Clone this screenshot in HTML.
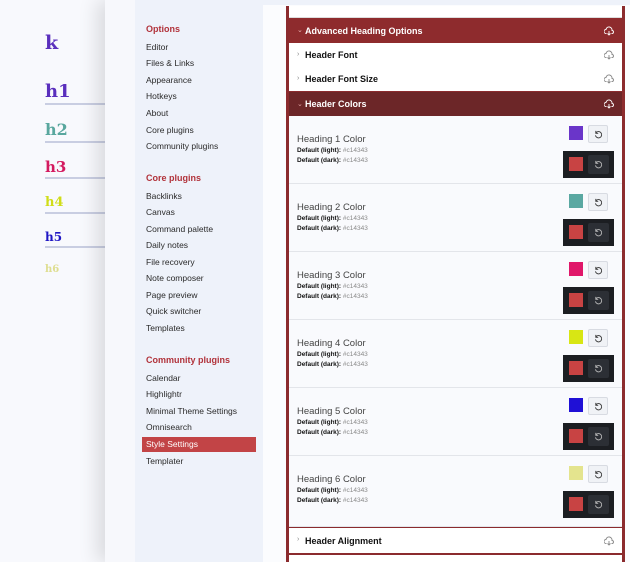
<!DOCTYPE html>
<html><head><style>
*{margin:0;padding:0;box-sizing:border-box}
body{width:630px;height:562px;overflow:hidden;background:#f8f9fd;font-family:"Liberation Sans",sans-serif;position:relative}
.abs{position:absolute}
.hd{position:absolute;left:45px;font-family:"DejaVu Serif","Liberation Serif",serif;font-weight:bold}
.ln{position:absolute;left:45px;width:65px;height:2px;background:#c9cee2}
.modal{position:absolute;left:105px;top:0;width:525px;height:562px;background:#f7f8fc;box-shadow:-8px 0 18px rgba(0,0,0,.12)}
.side{position:absolute;left:135px;top:0;width:128px;height:562px;background:#eef2fa}
.side div{position:absolute;left:11px;font-size:8.5px;color:#2a2a2a}
.side .t{color:#b1323a;font-weight:bold;font-size:9px}
.content{position:absolute;left:263px;top:0;width:367px;height:562px;background:#fbfcfe}
.frame{position:absolute;left:286px;top:6px;width:339px;height:556px;background:#8b2b2e}
.row{position:absolute;left:289px;width:333px;font-size:9px;font-weight:bold;color:#111}
.row span.c{position:absolute;left:8px;font-size:7px;color:#888;font-weight:normal}
.row span.l{position:absolute;left:16px}
.cl{position:absolute;right:8px;width:10px;height:10px}
.hc{position:absolute;left:289px;width:333px;height:68px;background:#f9fafd;border-bottom:1px solid #e3e5ea}
.hc .n{position:absolute;left:8px;top:18px;font-size:9.5px;color:#444}
.hc .d{position:absolute;left:8px;font-size:6.5px;color:#111;font-weight:bold}
.hc .d i{font-style:normal;font-weight:normal;color:#888}
.sw{position:absolute;left:280px;top:10px;width:14px;height:14px}
.rb{position:absolute;left:299px;top:9px;width:20px;height:18px;background:#f0f2f6;border:1px solid #d8dbe2;border-radius:2px}
.dk{position:absolute;left:274px;top:35px;width:51px;height:27px;background:#1c1e22}
.dk .r{position:absolute;left:6px;top:6px;width:14px;height:14px;background:#c84343}
.dk .b{position:absolute;left:25px;top:4px;width:21px;height:19px;background:#2c2f35;border-radius:2px}
svg.ic{position:absolute;left:5px;top:4px}
</style></head><body>
<div class="hd" style="top:32px;font-size:19px;color:#5a2fbd">k</div>
<div class="hd" style="top:81px;font-size:18px;color:#5a2fbd">h1</div><div class="ln" style="top:103px"></div>
<div class="hd" style="top:120px;font-size:16px;color:#59a79e">h2</div><div class="ln" style="top:141px"></div>
<div class="hd" style="top:158px;font-size:15px;color:#d41a5f">h3</div><div class="ln" style="top:177px"></div>
<div class="hd" style="top:195px;font-size:13px;color:#d0dd18">h4</div><div class="ln" style="top:212px"></div>
<div class="hd" style="top:230px;font-size:12px;color:#1f16c4">h5</div><div class="ln" style="top:246px"></div>
<div class="hd" style="top:264px;font-size:10px;color:#dede90">h6</div>
<div class="modal"></div>
<div class="side">
<div class="t" style="top:24px">Options</div>
<div style="top:42px">Editor</div><div style="top:58px">Files &amp; Links</div><div style="top:75px">Appearance</div><div style="top:91px">Hotkeys</div><div style="top:108px">About</div><div style="top:125px">Core plugins</div><div style="top:141px">Community plugins</div>
<div class="t" style="top:173px">Core plugins</div>
<div style="top:191px">Backlinks</div><div style="top:207px">Canvas</div><div style="top:224px">Command palette</div><div style="top:240px">Daily notes</div><div style="top:257px">File recovery</div><div style="top:273px">Note composer</div><div style="top:290px">Page preview</div><div style="top:306px">Quick switcher</div><div style="top:323px">Templates</div>
<div class="t" style="top:355px">Community plugins</div>
<div style="top:373px">Calendar</div><div style="top:389px">Highlightr</div><div style="top:406px">Minimal Theme Settings</div><div style="top:422px">Omnisearch</div>
<div style="top:437px;left:7px;width:114px;height:15px;background:#c24446"></div>
<div style="top:439px;color:#fff">Style Settings</div>
<div style="top:456px">Templater</div>
</div>
<div class="content"></div>
<div class="abs" style="left:263px;top:0;width:367px;height:5px;background:#eef2fa"></div>
<div class="frame"></div>
<div class="abs" style="left:289px;top:6px;width:333px;height:12px;background:#fff;border-bottom:1px solid #ddd"></div>
<div class="row" style="top:18px;height:25px;background:#8e2b2d;color:#fff"><span class="c" style="top:8px;color:#e8b0b0">⌄</span><span class="l" style="top:8px">Advanced Heading Options</span><svg class="cl" style="top:8px" viewBox="0 0 10 10"><path d="M2.5 7.5H2a2 2 0 0 1 0-4 3 3 0 0 1 6 1 1.5 1.5 0 0 1 0 3h-.5M5 5v4M3.5 7.5 5 9l1.5-1.5" fill="none" stroke="#fff" stroke-width=".9"/></svg></div>
<div class="row" style="top:43px;height:24px;background:#fff"><span class="c" style="top:8px">›</span><span class="l" style="top:7px">Header Font</span><svg class="cl" style="top:7px" viewBox="0 0 10 10"><path d="M2.5 7.5H2a2 2 0 0 1 0-4 3 3 0 0 1 6 1 1.5 1.5 0 0 1 0 3h-.5M5 5v4M3.5 7.5 5 9l1.5-1.5" fill="none" stroke="#888" stroke-width=".9"/></svg></div>
<div class="row" style="top:67px;height:24px;background:#fff"><span class="c" style="top:8px">›</span><span class="l" style="top:7px">Header Font Size</span><svg class="cl" style="top:7px" viewBox="0 0 10 10"><path d="M2.5 7.5H2a2 2 0 0 1 0-4 3 3 0 0 1 6 1 1.5 1.5 0 0 1 0 3h-.5M5 5v4M3.5 7.5 5 9l1.5-1.5" fill="none" stroke="#888" stroke-width=".9"/></svg></div>
<div class="row" style="top:92px;height:24px;background:#6c2628;color:#fff"><span class="c" style="top:8px;color:#e0a0a0">⌄</span><span class="l" style="top:7px">Header Colors</span><svg class="cl" style="top:7px" viewBox="0 0 10 10"><path d="M2.5 7.5H2a2 2 0 0 1 0-4 3 3 0 0 1 6 1 1.5 1.5 0 0 1 0 3h-.5M5 5v4M3.5 7.5 5 9l1.5-1.5" fill="none" stroke="#fff" stroke-width=".9"/></svg></div>

<div class="hc" style="top:116px"><div class="n">Heading 1 Color</div><div class="d" style="top:31px">Default (light): <i>#c14343</i></div><div class="d" style="top:41px">Default (dark): <i>#c14343</i></div><div class="sw" style="background:#6a35c9"></div><div class="rb"><svg class="ic" width="9" height="9" viewBox="0 0 10 10"><path d="M2 3.5A3.5 3.5 0 1 1 1.6 6M2 1v2.7h2.7" fill="none" stroke="#333" stroke-width="1"/></svg></div><div class="dk"><div class="r"></div><div class="b"><svg class="ic" width="9" height="9" viewBox="0 0 10 10" style="left:6px;top:5px"><path d="M2 3.5A3.5 3.5 0 1 1 1.6 6M2 1v2.7h2.7" fill="none" stroke="#bbb" stroke-width="1"/></svg></div></div></div>
<div class="hc" style="top:184px"><div class="n">Heading 2 Color</div><div class="d" style="top:31px">Default (light): <i>#c14343</i></div><div class="d" style="top:41px">Default (dark): <i>#c14343</i></div><div class="sw" style="background:#5aa8a2"></div><div class="rb"><svg class="ic" width="9" height="9" viewBox="0 0 10 10"><path d="M2 3.5A3.5 3.5 0 1 1 1.6 6M2 1v2.7h2.7" fill="none" stroke="#333" stroke-width="1"/></svg></div><div class="dk"><div class="r"></div><div class="b"><svg class="ic" width="9" height="9" viewBox="0 0 10 10" style="left:6px;top:5px"><path d="M2 3.5A3.5 3.5 0 1 1 1.6 6M2 1v2.7h2.7" fill="none" stroke="#bbb" stroke-width="1"/></svg></div></div></div>
<div class="hc" style="top:252px"><div class="n">Heading 3 Color</div><div class="d" style="top:31px">Default (light): <i>#c14343</i></div><div class="d" style="top:41px">Default (dark): <i>#c14343</i></div><div class="sw" style="background:#e0176a"></div><div class="rb"><svg class="ic" width="9" height="9" viewBox="0 0 10 10"><path d="M2 3.5A3.5 3.5 0 1 1 1.6 6M2 1v2.7h2.7" fill="none" stroke="#333" stroke-width="1"/></svg></div><div class="dk"><div class="r"></div><div class="b"><svg class="ic" width="9" height="9" viewBox="0 0 10 10" style="left:6px;top:5px"><path d="M2 3.5A3.5 3.5 0 1 1 1.6 6M2 1v2.7h2.7" fill="none" stroke="#bbb" stroke-width="1"/></svg></div></div></div>
<div class="hc" style="top:320px"><div class="n">Heading 4 Color</div><div class="d" style="top:31px">Default (light): <i>#c14343</i></div><div class="d" style="top:41px">Default (dark): <i>#c14343</i></div><div class="sw" style="background:#d8e614"></div><div class="rb"><svg class="ic" width="9" height="9" viewBox="0 0 10 10"><path d="M2 3.5A3.5 3.5 0 1 1 1.6 6M2 1v2.7h2.7" fill="none" stroke="#333" stroke-width="1"/></svg></div><div class="dk"><div class="r"></div><div class="b"><svg class="ic" width="9" height="9" viewBox="0 0 10 10" style="left:6px;top:5px"><path d="M2 3.5A3.5 3.5 0 1 1 1.6 6M2 1v2.7h2.7" fill="none" stroke="#bbb" stroke-width="1"/></svg></div></div></div>
<div class="hc" style="top:388px"><div class="n">Heading 5 Color</div><div class="d" style="top:31px">Default (light): <i>#c14343</i></div><div class="d" style="top:41px">Default (dark): <i>#c14343</i></div><div class="sw" style="background:#1f10d6"></div><div class="rb"><svg class="ic" width="9" height="9" viewBox="0 0 10 10"><path d="M2 3.5A3.5 3.5 0 1 1 1.6 6M2 1v2.7h2.7" fill="none" stroke="#333" stroke-width="1"/></svg></div><div class="dk"><div class="r"></div><div class="b"><svg class="ic" width="9" height="9" viewBox="0 0 10 10" style="left:6px;top:5px"><path d="M2 3.5A3.5 3.5 0 1 1 1.6 6M2 1v2.7h2.7" fill="none" stroke="#bbb" stroke-width="1"/></svg></div></div></div>
<div class="hc" style="top:456px;height:71px"><div class="n">Heading 6 Color</div><div class="d" style="top:31px">Default (light): <i>#c14343</i></div><div class="d" style="top:41px">Default (dark): <i>#c14343</i></div><div class="sw" style="background:#e4e48e"></div><div class="rb"><svg class="ic" width="9" height="9" viewBox="0 0 10 10"><path d="M2 3.5A3.5 3.5 0 1 1 1.6 6M2 1v2.7h2.7" fill="none" stroke="#333" stroke-width="1"/></svg></div><div class="dk"><div class="r"></div><div class="b"><svg class="ic" width="9" height="9" viewBox="0 0 10 10" style="left:6px;top:5px"><path d="M2 3.5A3.5 3.5 0 1 1 1.6 6M2 1v2.7h2.7" fill="none" stroke="#bbb" stroke-width="1"/></svg></div></div></div>
<div class="row" style="top:528px;height:25px;background:#fff"><span class="c" style="top:8px">›</span><span class="l" style="top:8px">Header Alignment</span><svg class="cl" style="top:8px" viewBox="0 0 10 10"><path d="M2.5 7.5H2a2 2 0 0 1 0-4 3 3 0 0 1 6 1 1.5 1.5 0 0 1 0 3h-.5M5 5v4M3.5 7.5 5 9l1.5-1.5" fill="none" stroke="#888" stroke-width=".9"/></svg></div>
<div class="abs" style="left:289px;top:555px;width:333px;height:7px;background:#fff"></div>
</body></html>
